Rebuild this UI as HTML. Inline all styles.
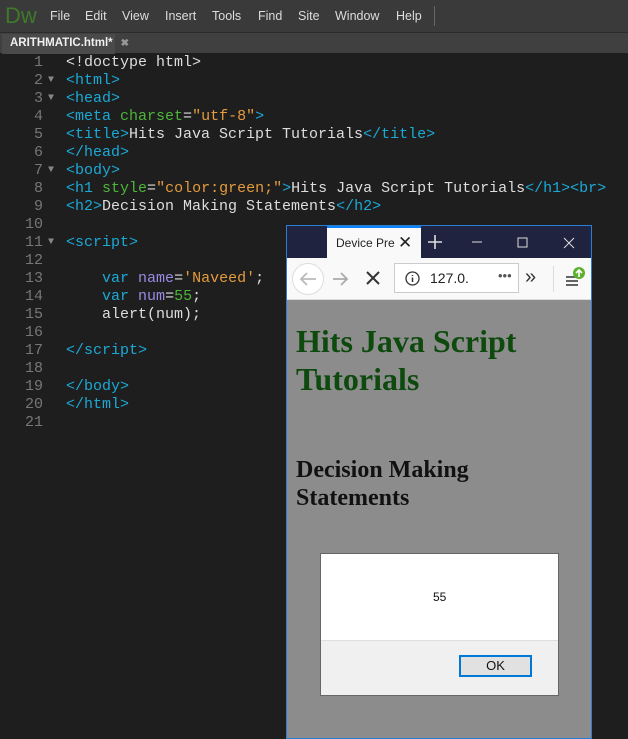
<!DOCTYPE html>
<html><head><meta charset="utf-8">
<style>
*{margin:0;padding:0;box-sizing:border-box}
body{width:628px;height:739px;background:#1e1e1e;position:relative;overflow:hidden;font-family:"Liberation Sans",sans-serif}
.menu{position:absolute;left:0;top:0;width:628px;height:32px;background:#3a3a3a;color:#ddd;font-size:12.5px}
.menu span{position:absolute;top:9px}
.dw{position:absolute;left:5px;top:3px;color:#3f7a2a;font-size:22px;letter-spacing:0px}
.tabbar{position:absolute;left:0;top:32px;width:628px;height:21px;background:#404040;border-top:1px solid #2c2c2c}
.tab{position:absolute;left:2px;top:1px;width:113px;height:20px;background:#4a4a4a;color:#f0f0f0;font-size:11.5px;font-weight:bold;padding:3px 0 0 8px}
.tab b{color:#999;font-size:10px;margin-left:8px}
.code{position:absolute;left:0;top:54px;width:628px;font-family:"Liberation Mono",monospace;font-size:15px;line-height:18px;color:#ddd;white-space:pre}
.ln{position:absolute;left:0;width:43px;text-align:right;color:#777}
.ar{position:absolute;left:48px;color:#888;font-size:10px}
.tx{position:absolute;left:66px}
.t{color:#1ba9d6}.a{color:#4db53a}.s{color:#e39b3c}.v{color:#9b8ae6}.n{color:#4db53a}
.win{position:absolute;left:286px;top:225px;width:306px;height:514px;background:#8c8c8c;border:1px solid #2a7fd4;border-top:none}
.title{position:absolute;left:0;top:0;width:304px;height:33px;background:#1f2340;border-top:1px solid #2a7fd4}
.btab{position:absolute;left:40px;top:0;width:94px;height:33px;background:#f9f9fa;border-top:2px solid #0a84ff;font-size:12px;color:#222;padding:8px 0 0 9px;white-space:nowrap;overflow:hidden}
.tool{position:absolute;left:0;top:33px;width:304px;height:42px;background:#f9f9fa;border-bottom:1px solid #ddd}
.url{position:absolute;left:107px;top:5px;width:125px;height:30px;border:1px solid #ccc;background:#fff;font-size:14px;color:#222;padding:6px 0 0 35px}
.h1{position:absolute;left:9px;top:97px;color:#0e4a0e;font:bold 32px/38px "Liberation Serif",serif}
.h2{position:absolute;left:9px;top:231px;color:#111;font:bold 24px/28px "Liberation Serif",serif}
.dlg{position:absolute;left:33px;top:328px;width:239px;height:143px;background:#fff;border:1px solid #666}
.foot{position:absolute;left:0;top:86px;width:237px;height:55px;background:#f0f0f0;border-top:1px solid #dfdfdf}
.ok{position:absolute;left:138px;top:14px;width:73px;height:22px;border:2px solid #0078d7;background:#e1e1e1;font-size:13px;text-align:center;line-height:18px;color:#111}
</style></head><body>
<div class="menu"><div class="dw">Dw</div>
<span style="left:50px">File</span><span style="left:85px">Edit</span><span style="left:122px">View</span><span style="left:165px">Insert</span><span style="left:212px">Tools</span><span style="left:258px">Find</span><span style="left:298px">Site</span><span style="left:335px">Window</span><span style="left:396px">Help</span>
<div style="position:absolute;left:434px;top:6px;width:1px;height:20px;background:#666"></div></div>
<div class="tabbar"><div class="tab">ARITHMATIC.html*<b>✖</b></div></div>
<div class="code">
<div class="ln" style="top:0">1</div><div class="tx" style="top:0">&lt;!doctype html&gt;</div>
<div class="ln" style="top:18px">2</div><div class="ar" style="top:18px">▼</div><div class="tx t" style="top:18px">&lt;html&gt;</div>
<div class="ln" style="top:36px">3</div><div class="ar" style="top:36px">▼</div><div class="tx t" style="top:36px">&lt;head&gt;</div>
<div class="ln" style="top:54px">4</div><div class="tx" style="top:54px"><span class="t">&lt;meta</span> <span class="a">charset</span>=<span class="s">"utf-8"</span><span class="t">&gt;</span></div>
<div class="ln" style="top:72px">5</div><div class="tx" style="top:72px"><span class="t">&lt;title&gt;</span>Hits Java Script Tutorials<span class="t">&lt;/title&gt;</span></div>
<div class="ln" style="top:90px">6</div><div class="tx t" style="top:90px">&lt;/head&gt;</div>
<div class="ln" style="top:108px">7</div><div class="ar" style="top:108px">▼</div><div class="tx t" style="top:108px">&lt;body&gt;</div>
<div class="ln" style="top:126px">8</div><div class="tx" style="top:126px"><span class="t">&lt;h1</span> <span class="a">style</span>=<span class="s">"color:green;"</span><span class="t">&gt;</span>Hits Java Script Tutorials<span class="t">&lt;/h1&gt;&lt;br&gt;</span></div>
<div class="ln" style="top:144px">9</div><div class="tx" style="top:144px"><span class="t">&lt;h2&gt;</span>Decision Making Statements<span class="t">&lt;/h2&gt;</span></div>
<div class="ln" style="top:162px">10</div>
<div class="ln" style="top:180px">11</div><div class="ar" style="top:180px">▼</div><div class="tx t" style="top:180px">&lt;script&gt;</div>
<div class="ln" style="top:198px">12</div>
<div class="ln" style="top:216px">13</div><div class="tx" style="top:216px">    <span class="t">var</span> <span class="v">name</span>=<span class="s">'Naveed'</span>;</div>
<div class="ln" style="top:234px">14</div><div class="tx" style="top:234px">    <span class="t">var</span> <span class="v">num</span>=<span class="n">55</span>;</div>
<div class="ln" style="top:252px">15</div><div class="tx" style="top:252px">    alert(num);</div>
<div class="ln" style="top:270px">16</div>
<div class="ln" style="top:288px">17</div><div class="tx t" style="top:288px">&lt;/script&gt;</div>
<div class="ln" style="top:306px">18</div>
<div class="ln" style="top:324px">19</div><div class="tx t" style="top:324px">&lt;/body&gt;</div>
<div class="ln" style="top:342px">20</div><div class="tx t" style="top:342px">&lt;/html&gt;</div>
<div class="ln" style="top:360px">21</div>
</div>
<div class="win">
<div class="title">
<div class="btab">Device Pre<span style="position:absolute;left:68px;top:5px;font-size:17px;background:#f9f9fa;padding-left:3px">✕</span></div>
<svg style="position:absolute;left:140px;top:8px" width="16" height="16"><path d="M8 1V15M1 8H15" stroke="#ddd" stroke-width="1.6"/></svg>
<svg style="position:absolute;left:184px;top:10px" width="12" height="12"><path d="M1 6H11" stroke="#ddd"/></svg>
<svg style="position:absolute;left:230px;top:11px" width="12" height="12"><rect x="1" y="1" width="9" height="9" fill="none" stroke="#ddd"/></svg>
<svg style="position:absolute;left:276px;top:11px" width="12" height="12"><path d="M1 1L11 11M11 1L1 11" stroke="#ddd"/></svg>
</div>
<div class="tool">
<svg style="position:absolute;left:4px;top:4px" width="34" height="34"><circle cx="17" cy="17" r="15.5" fill="#fff" stroke="#ddd"/><path d="M25 17H10M16 11L10 17L16 23" stroke="#bbb" stroke-width="1.8" fill="none"/></svg>
<svg style="position:absolute;left:44px;top:12px" width="18" height="18"><path d="M2 9H16M10 3L16 9L10 15" stroke="#aaa" stroke-width="1.8" fill="none"/></svg>
<svg style="position:absolute;left:78px;top:12px" width="16" height="16"><path d="M2 2L14 14M14 2L2 14" stroke="#333" stroke-width="2"/></svg>
<div class="url">127.0.<svg style="position:absolute;left:10px;top:7px" width="15" height="15"><circle cx="7.5" cy="7.5" r="6.5" fill="none" stroke="#333" stroke-width="1.3"/><path d="M7.5 6.5V11M7.5 4V5" stroke="#333" stroke-width="1.5"/></svg><span style="position:absolute;right:0px;top:4px;width:20px;background:#fff;font-size:13px;letter-spacing:0px;color:#555">•••</span></div>
<div style="position:absolute;left:238px;top:8px;font-size:20px;color:#333">»</div>
<div style="position:absolute;left:266px;top:8px;width:1px;height:26px;background:#ddd"></div>
<svg style="position:absolute;left:276px;top:8px" width="26" height="26"><path d="M3 11H15M3 15H15M3 19H15" stroke="#333" stroke-width="1.6"/><circle cx="16" cy="7" r="6" fill="#5db12f"/><path d="M16 11V4M13 7L16 4L19 7" stroke="#fff" stroke-width="1.6" fill="none"/></svg>
</div>
<div class="h1">Hits Java Script<br>Tutorials</div>
<div class="h2">Decision Making<br>Statements</div>
<div class="dlg"><div style="position:absolute;left:112px;top:36px;font-size:12px;color:#111">55</div>
<div class="foot"><div class="ok">OK</div></div></div>
</div>
</body></html>
